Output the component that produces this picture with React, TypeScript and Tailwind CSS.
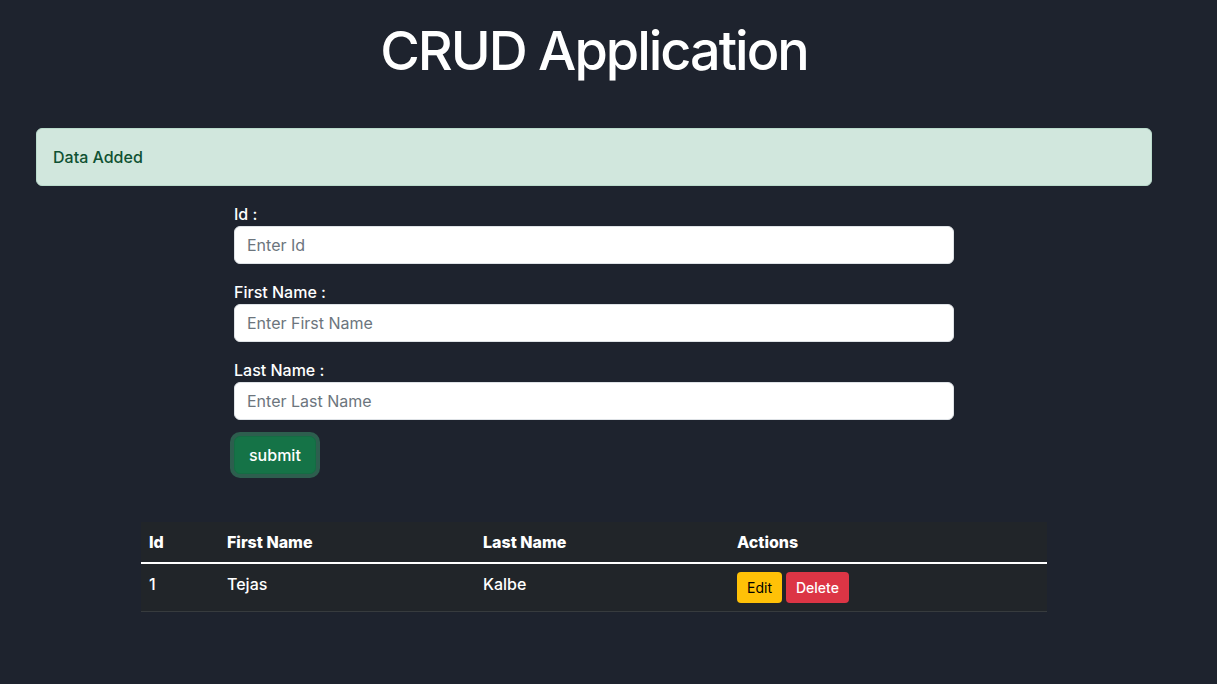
import React, { useState } from 'react';

interface Person {
  id: number;
  firstName: string;
  lastName: string;
}

const font = { fontFamily: 'Inter, "Noto Sans", sans-serif' };

const Field: React.FC<{ label: string; placeholder: string }> = ({ label, placeholder }) => (
  <div className="mb-4">
    <label className="block text-[16px] leading-6 font-medium text-white">{label}</label>
    <input
      type="text"
      placeholder={placeholder}
      className="block w-full h-[38px] bg-white border border-[#dee2e6] rounded-md px-3 text-[16px] text-[#212529] placeholder:text-[#6c757d] outline-none"
    />
  </div>
);

export default function App() {
  const [rows] = useState<Person[]>([{ id: 1, firstName: 'Tejas', lastName: 'Kalbe' }]);

  return (
    <div className="min-h-screen bg-[#1e232e]" style={font}>
      <div className="w-[1140px] ml-[24px] px-3">
        {/* Title */}
        <h1 className="pt-[19px] text-center text-[54px] leading-[1.2] font-medium tracking-[-2px] text-white">
          CRUD Application
        </h1>

        {/* Alert */}
        <div className="mt-[44px] h-[58px] rounded-md border border-[#badbcc] bg-[#d1e7dd] px-4 flex items-center text-[16px] font-medium text-[#0f5132]">
          Data Added
        </div>

        {/* Form */}
        <form className="w-[720px] mx-auto mt-4" onSubmit={(e) => e.preventDefault()}>
          <Field label="Id :" placeholder="Enter Id" />
          <Field label="First Name :" placeholder="Enter First Name" />
          <Field label="Last Name :" placeholder="Enter Last Name" />
          <button
            type="submit"
            className="h-[38px] px-[14px] rounded-md border border-[#146c43] bg-[#157347] text-white text-[16px] font-medium shadow-[0_0_0_4px_rgba(60,153,110,0.5)]"
          >
            submit
          </button>
        </form>

        {/* Table */}
        <table className="w-[906px] mx-auto mt-12 bg-[#212529] text-white border-collapse">
          <thead>
            <tr className="border-b-2 border-white">
              <th className="w-[78px] p-2 text-left text-[16px] leading-6 font-extrabold">Id</th>
              <th className="w-[256px] p-2 text-left text-[16px] leading-6 font-extrabold">First Name</th>
              <th className="w-[254px] p-2 text-left text-[16px] leading-6 font-extrabold">Last Name</th>
              <th className="p-2 text-left text-[16px] leading-6 font-extrabold">Actions</th>
            </tr>
          </thead>
          <tbody>
            {rows.map((r) => (
              <tr key={r.id} className="border-b border-[#373b3e]">
                <td className="p-2 align-top text-[16px] leading-6 font-medium">{r.id}</td>
                <td className="p-2 align-top text-[16px] leading-6 font-medium">{r.firstName}</td>
                <td className="p-2 align-top text-[16px] leading-6 font-medium">{r.lastName}</td>
                <td className="p-2 align-top">
                  <div className="flex gap-1">
                    <button className="h-[31px] px-[10px] rounded bg-[#ffc107] text-black text-[14px]">Edit</button>
                    <button className="h-[31px] px-[10px] rounded bg-[#dc3545] text-white text-[14px] font-medium">Delete</button>
                  </div>
                </td>
              </tr>
            ))}
          </tbody>
        </table>
      </div>
    </div>
  );
}
